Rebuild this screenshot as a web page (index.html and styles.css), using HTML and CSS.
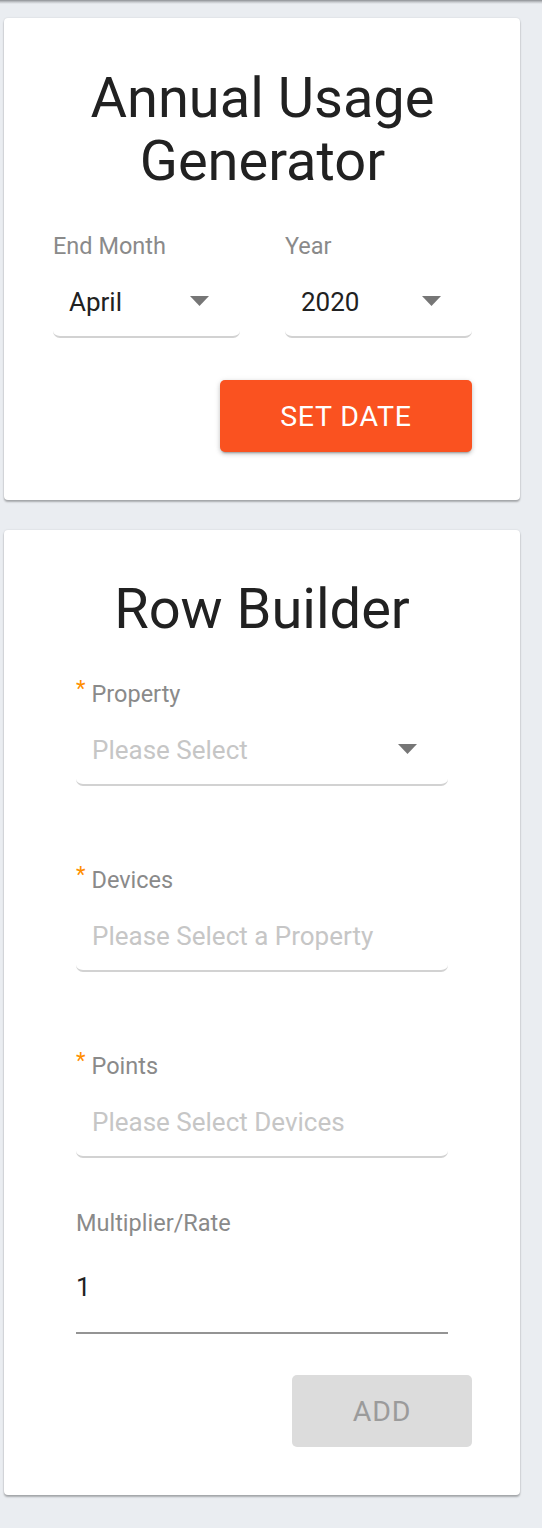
FILE: index.html
```html
<!DOCTYPE html>
<html lang="en">
<head>
<meta charset="utf-8">
<title>Annual Usage Generator</title>
<link rel="stylesheet" href="styles.css">
</head>
<body>
<div class="appbar-edge"></div>
<main class="page">
  <section class="card card-first">
    <h1 class="card-title">Annual Usage Generator</h1>
    <div class="date-row">
      <div class="field">
        <div class="label">End Month</div>
        <div class="select">
          <span class="value">April</span>
          <svg class="caret" width="19" height="10" viewBox="0 0 19 10"><polygon points="0,0 19,0 9.5,10"/></svg>
        </div>
      </div>
      <div class="field">
        <div class="label">Year</div>
        <div class="select">
          <span class="value">2020</span>
          <svg class="caret" width="19" height="10" viewBox="0 0 19 10"><polygon points="0,0 19,0 9.5,10"/></svg>
        </div>
      </div>
    </div>
    <div class="actions">
      <button class="btn btn-primary btn-set">SET DATE</button>
    </div>
  </section>

  <section class="card">
    <h1 class="card-title">Row Builder</h1>
    <div class="form">
      <div class="field">
        <div class="label"><span class="req">*</span>Property</div>
        <div class="select">
          <span class="value placeholder">Please Select</span>
          <svg class="caret" width="19" height="10" viewBox="0 0 19 10"><polygon points="0,0 19,0 9.5,10"/></svg>
        </div>
      </div>
      <div class="field">
        <div class="label"><span class="req">*</span>Devices</div>
        <div class="select">
          <span class="value placeholder">Please Select a Property</span>
        </div>
      </div>
      <div class="field">
        <div class="label"><span class="req">*</span>Points</div>
        <div class="select">
          <span class="value placeholder">Please Select Devices</span>
        </div>
      </div>
      <div class="field text-field">
        <div class="label">Multiplier/Rate</div>
        <div class="input">1</div>
      </div>
    </div>
    <div class="actions actions-add">
      <button class="btn btn-disabled btn-add">ADD</button>
    </div>
  </section>
</main>
</body>
</html>
```

FILE: styles.css
```css
* { box-sizing: border-box; }

html, body {
  margin: 0;
  padding: 0;
}

body {
  background: #eaedf1;
  font-family: Roboto, "Noto Sans", "Liberation Sans", sans-serif;
  color: #212121;
  width: 542px;
  min-height: 1528px;
}

.appbar-edge {
  height: 4px;
  background: linear-gradient(to bottom, #8c8f93 0%, #c4c7cb 50%, #eaedf1 100%);
}

.page {
  display: flex;
  flex-direction: column;
  gap: 30px;
  padding: 14px 22px 32px 4px;
}

.card {
  background: #ffffff;
  border-radius: 4px;
  box-shadow: 0 2px 2px rgba(0, 0, 0, 0.28), 0 0 2px rgba(0, 0, 0, 0.12);
  padding: 48px 48px 48px 48px;
}

.card-first {
  padding-top: 49px;
  padding-left: 49px;
}

.card-title {
  margin: 0 0 39px;
  font-size: 56px;
  line-height: 63px;
  font-weight: 400;
  text-align: center;
  color: #212121;
}

.date-row {
  display: grid;
  grid-template-columns: 1fr 1fr;
  column-gap: 45px;
}

.field {
  display: flex;
  flex-direction: column;
}

.label {
  font-size: 23.5px;
  line-height: 28px;
  color: #8a8a8a;
  white-space: nowrap;
}

.req {
  color: #ff8f00;
  font-size: 22px;
  line-height: 1;
  vertical-align: 6px;
  margin-right: 6px;
}

.select {
  display: flex;
  align-items: center;
  justify-content: space-between;
  padding: 27px 31px 19px 16px;
  border-bottom: 2px solid #d2d2d2;
  border-radius: 0 0 7px 7px;
}

.value {
  font-size: 26px;
  line-height: 30px;
  color: #212121;
  white-space: nowrap;
}

.value.placeholder {
  color: #c6c6c6;
}

.caret {
  display: block;
  fill: #767676;
  margin-top: -2px;
}

.form {
  display: flex;
  flex-direction: column;
  gap: 78px;
  margin: -2px 24px 0;
}

.form .field {
  min-height: 107px;
}

.form .text-field {
  min-height: 0;
  margin-top: -27px;
}

.input {
  margin-top: 35px;
  font-size: 26px;
  line-height: 30px;
  color: #212121;
  padding-bottom: 30px;
  border-bottom: 2px solid #949494;
}

.actions {
  display: flex;
  justify-content: flex-end;
  margin-top: 42px;
}

.actions-add {
  margin-top: 41px;
}

.btn {
  height: 72px;
  border: none;
  border-radius: 5px;
  font-family: Roboto, "Noto Sans", "Liberation Sans", sans-serif;
  font-size: 28.5px;
  font-weight: 400;
  letter-spacing: 0.8px;
  padding: 0;
}

.btn-primary {
  background: #fa5220;
  color: #ffffff;
  box-shadow: 0 3px 2px -2px rgba(0, 0, 0, 0.25), 0 2px 4px rgba(0, 0, 0, 0.16), 0 1px 6px rgba(0, 0, 0, 0.1);
}

.btn-set {
  width: 252px;
}

.btn-disabled {
  background: #dcdcdc;
  color: #9b9b9b;
}

.btn-add {
  width: 180px;
}
```
